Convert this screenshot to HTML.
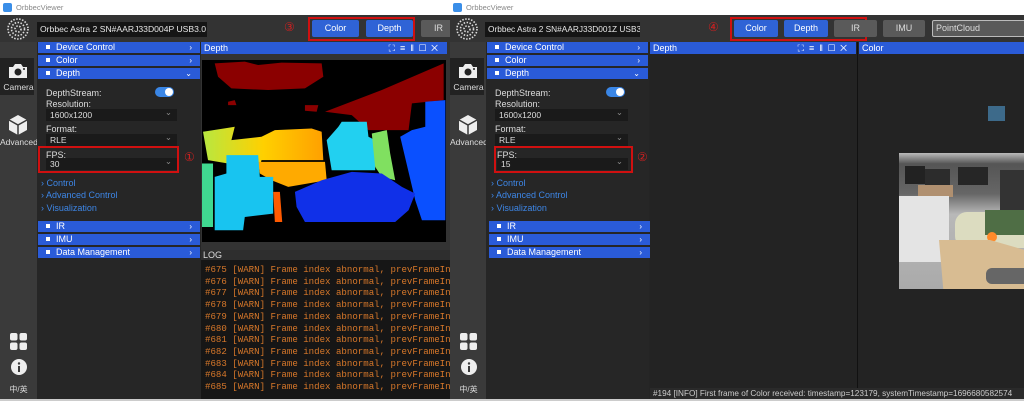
<!DOCTYPE html>
<html><head><meta charset="utf-8"><style>
*{margin:0;padding:0;box-sizing:border-box}
body{width:1024px;height:401px;overflow:hidden;background:#242424;font-family:"Liberation Sans","Noto Sans CJK SC",sans-serif;font-size:9px;color:#ddd;position:relative}
.a{position:absolute}
.title{background:#fff;height:15px;top:0;color:#888;font-size:7.5px;line-height:15px}
.tb{background:#333;top:15px;height:27px}
.combo{background:#151515;color:#e6e6e6;font-size:8.6px;line-height:15px;padding-left:3px;height:15px;white-space:nowrap;overflow:hidden}
.btn{background:#2f63d6;color:#fff;text-align:center;line-height:17px;height:17px;border-radius:2px;font-size:9px}
.gbtn{background:#5a5a5a;color:#ddd;text-align:center;line-height:17px;height:17px;border-radius:2px}
.hdr{background:#2a5bd8;color:#fff;height:11px;line-height:11px;font-size:9px;padding-left:8px}
.hdr:before{content:"";display:inline-block;width:4px;height:4px;background:#fff;margin-right:6px;vertical-align:1px}
.hdr i{position:absolute;right:8px;font-style:normal;font-size:8px}
.side{background:#3a3a3a;top:42px;width:37px;height:357px}
.panel{background:#262626}
.lbl{color:#ddd;font-size:9px}
.sel{background:#1a1a1a;color:#ddd;height:12px;line-height:12px;padding-left:4px;font-size:8.5px}
.sel:after{content:"⌄";position:absolute;right:5px;top:-3px;color:#888}
.lnk{color:#3d86e6;font-size:9px}
.red{border:2px solid #d01010}
.num{color:#d02020;font-size:12px;font-family:"Liberation Serif",serif}
.vh{background:#2a5bd8;color:#fff;height:12px;line-height:12px;padding-left:3px;font-size:9px}
.log{font-family:"Liberation Mono",monospace;color:#d8782a;font-size:9.1px;line-height:11.7px;white-space:pre}
.sidelbl{color:#ddd;font-size:8.5px;text-align:center;width:37px}
</style></head><body>

<!-- LEFT WINDOW -->
<div class="a title" style="left:0;width:450px;padding-left:16px">OrbbecViewer</div>
<div class="a" style="left:3px;top:3px;width:9px;height:9px;background:#3a8ee8;border-radius:2px"></div>
<div class="a tb" style="left:0;width:450px"></div>
<svg class="a" style="left:6px;top:17px" width="24" height="24" viewBox="0 0 24 24"><g fill="none" stroke="#ddd" stroke-width="1.6" stroke-dasharray="1.5 1.5"><circle cx="12" cy="12" r="10"/><circle cx="12" cy="12" r="6.5"/><circle cx="12" cy="12" r="3"/></g></svg>
<div class="a combo" style="left:37px;top:22px;width:170px">Orbbec Astra 2 SN#AARJ33D004P USB3.0 <span style="color:#888">⌄</span></div>
<div class="a num" style="left:284px;top:20px">③</div>
<div class="a red" style="left:308px;top:17px;width:107px;height:24px"></div>
<div class="a btn" style="left:312px;top:20px;width:47px">Color</div>
<div class="a btn" style="left:366px;top:20px;width:47px">Depth</div>
<div class="a gbtn" style="left:421px;top:20px;width:35px">IR</div>

<div class="a side" style="left:0"></div>
<div class="a" style="left:0;top:58px;width:34px;height:37px;background:#222"></div>
<svg class="a" style="left:8px;top:63px" width="20" height="16" viewBox="0 0 20 16"><path d="M1 4h4l2-3h6l2 3h4v11H1z" fill="#eee"/><circle cx="10" cy="9" r="3.5" fill="#222"/><circle cx="16" cy="6" r="1" fill="#222"/></svg>
<div class="a sidelbl" style="left:0;top:82px">Camera</div>
<svg class="a" style="left:8px;top:114px" width="20" height="22" viewBox="0 0 20 22"><path d="M10 1l9 5v10l-9 5-9-5V6z" fill="#eee"/><path d="M1 6l9 5 9-5M10 11v10" stroke="#3a3a3a" stroke-width="1.5" fill="none"/></svg>
<div class="a sidelbl" style="left:0;top:137px">Advanced</div>
<svg class="a" style="left:10px;top:333px" width="17" height="17" viewBox="0 0 17 17" fill="#eee"><rect x="0" y="0" width="7.5" height="7.5" rx="2"/><rect x="9.5" y="0" width="7.5" height="7.5" rx="2"/><rect x="0" y="9.5" width="7.5" height="7.5" rx="2"/><rect x="9.5" y="9.5" width="7.5" height="7.5" rx="2"/></svg>
<svg class="a" style="left:11px;top:359px" width="16" height="16" viewBox="0 0 16 16"><circle cx="8" cy="8" r="8" fill="#eee"/><rect x="7" y="7" width="2" height="6" fill="#3a3a3a"/><circle cx="8" cy="4.5" r="1.2" fill="#3a3a3a"/></svg>
<div class="a sidelbl" style="left:0;top:384px;font-size:8px">中/英</div>

<div class="a panel" style="left:37px;top:42px;width:164px;height:357px"></div>
<div class="a hdr" style="left:38px;top:42px;width:162px">Device Control<i>›</i></div>
<div class="a hdr" style="left:38px;top:55px;width:162px">Color<i>›</i></div>
<div class="a hdr" style="left:38px;top:68px;width:162px">Depth<i>⌄</i></div>
<div class="a lbl" style="left:46px;top:88px">DepthStream:</div>
<div class="a" style="left:155px;top:87px;width:19px;height:10px;border-radius:5px;background:#3a86e6"></div>
<div class="a" style="left:165px;top:88px;width:8px;height:8px;border-radius:4px;background:#fff"></div>
<div class="a lbl" style="left:46px;top:99px">Resolution:</div>
<div class="a sel" style="left:46px;top:109px;width:131px">1600x1200</div>
<div class="a lbl" style="left:46px;top:124px">Format:</div>
<div class="a sel" style="left:46px;top:134px;width:131px">RLE</div>
<div class="a red" style="left:38px;top:146px;width:141px;height:27px"></div>
<div class="a lbl" style="left:46px;top:150px">FPS:</div>
<div class="a sel" style="left:46px;top:158px;width:131px">30</div>
<div class="a num" style="left:184px;top:150px">①</div>
<div class="a lnk" style="left:41px;top:178px">› Control</div>
<div class="a lnk" style="left:41px;top:190px">› Advanced Control</div>
<div class="a lnk" style="left:41px;top:203px">› Visualization</div>
<div class="a hdr" style="left:38px;top:221px;width:162px">IR<i>›</i></div>
<div class="a hdr" style="left:38px;top:234px;width:162px">IMU<i>›</i></div>
<div class="a hdr" style="left:38px;top:247px;width:162px">Data Management<i>›</i></div>

<div class="a" style="left:201px;top:42px;width:249px;height:208px;background:#333"></div>
<div class="a vh" style="left:201px;top:42px;width:246px">Depth<span style="position:absolute;right:4px;letter-spacing:5px">⛶≡‖☐✕</span></div>
<svg class="a" style="left:202px;top:60px" width="244" height="182" viewBox="22 60 730 545" preserveAspectRatio="none">
<defs><linearGradient id="yg" x1="0" x2="1"><stop offset="0" stop-color="#b8e840"/><stop offset=".5" stop-color="#ffd000"/><stop offset="1" stop-color="#ffa000"/></linearGradient></defs>
<rect x="22" y="60" width="730" height="545" fill="#000"/>
<path d="M60 70L150 65 190 75 260 68 380 70 385 110 330 145 220 150 110 145 70 110z" fill="#8b0000"/>
<path d="M390 215L560 150 745 70 745 180 650 190 640 270 520 270 470 225z" fill="#8b0000"/>
<path d="M330 195L370 195 365 215 330 212z M100 185L120 180 125 195 100 195z" fill="#8b0000"/>
<path d="M690 185L750 180 750 540 680 540 660 480 615 290 650 270 690 260z" fill="#0a50ff"/>
<path d="M25 275L120 260 110 300 200 290 240 270 350 265 380 275 385 360 200 360 190 400 100 370 40 360z" fill="url(#yg)"/>
<path d="M190 365L390 365 395 420 280 440 230 420 195 400z" fill="#ffaa00"/>
<path d="M20 370L55 370 55 560 20 560z" fill="#40d890"/>
<path d="M95 345L190 345 195 410 235 410 235 520 150 530 145 570 60 570 60 410 95 400z" fill="#18c4f0"/>
<path d="M235 455L255 455 262 545 240 545z" fill="#ff5a00"/>
<path d="M395 300L430 260 440 245 515 245 520 290 540 300 540 390 410 390z" fill="#22d0f0"/>
<path d="M530 280L575 270 585 340 600 420 560 410 540 380z" fill="#80e060"/>
<path d="M300 455L380 420 470 395 560 400 620 440 660 460 640 510 600 545 330 545 305 500z" fill="#1030e8"/>
</svg>
<div class="a" style="left:201px;top:250px;width:249px;height:10px;background:#2e2e2e;color:#ddd;font-size:9px;line-height:10px;padding-left:2px">LOG</div>
<div class="a" style="left:201px;top:260px;width:249px;height:139px;background:#161616;overflow:hidden"><div class="a log" style="left:4px;top:4px">#675 [WARN] Frame index abnormal, prevFrameIn
#676 [WARN] Frame index abnormal, prevFrameIn
#677 [WARN] Frame index abnormal, prevFrameIn
#678 [WARN] Frame index abnormal, prevFrameIn
#679 [WARN] Frame index abnormal, prevFrameIn
#680 [WARN] Frame index abnormal, prevFrameIn
#681 [WARN] Frame index abnormal, prevFrameIn
#682 [WARN] Frame index abnormal, prevFrameIn
#683 [WARN] Frame index abnormal, prevFrameIn
#684 [WARN] Frame index abnormal, prevFrameIn
#685 [WARN] Frame index abnormal, prevFrameIn</div></div>

<!-- RIGHT WINDOW -->
<div class="a title" style="left:450px;width:574px;padding-left:16px">OrbbecViewer</div>
<div class="a" style="left:453px;top:3px;width:9px;height:9px;background:#3a8ee8;border-radius:2px"></div>
<div class="a tb" style="left:450px;width:574px"></div>
<svg class="a" style="left:455px;top:17px" width="24" height="24" viewBox="0 0 24 24"><g fill="none" stroke="#ddd" stroke-width="1.6" stroke-dasharray="1.5 1.5"><circle cx="12" cy="12" r="10"/><circle cx="12" cy="12" r="6.5"/><circle cx="12" cy="12" r="3"/></g></svg>
<div class="a combo" style="left:485px;top:22px;width:155px;font-size:8.3px">Orbbec Astra 2 SN#AARJ33D001Z USB3.0 <span style="color:#888">⌄</span></div>
<div class="a num" style="left:708px;top:20px">④</div>
<div class="a red" style="left:730px;top:17px;width:137px;height:24px"></div>
<div class="a btn" style="left:734px;top:20px;width:44px">Color</div>
<div class="a btn" style="left:784px;top:20px;width:44px">Depth</div>
<div class="a gbtn" style="left:834px;top:20px;width:43px">IR</div>
<div class="a gbtn" style="left:883px;top:20px;width:42px">IMU</div>
<div class="a gbtn" style="left:932px;top:20px;width:95px;border:1px solid #bbb;text-align:left;padding-left:3px;line-height:15px">PointCloud</div>

<div class="a side" style="left:450px"></div>
<div class="a" style="left:450px;top:58px;width:34px;height:37px;background:#222"></div>
<svg class="a" style="left:458px;top:63px" width="20" height="16" viewBox="0 0 20 16"><path d="M1 4h4l2-3h6l2 3h4v11H1z" fill="#eee"/><circle cx="10" cy="9" r="3.5" fill="#222"/><circle cx="16" cy="6" r="1" fill="#222"/></svg>
<div class="a sidelbl" style="left:450px;top:82px">Camera</div>
<svg class="a" style="left:458px;top:114px" width="20" height="22" viewBox="0 0 20 22"><path d="M10 1l9 5v10l-9 5-9-5V6z" fill="#eee"/><path d="M1 6l9 5 9-5M10 11v10" stroke="#3a3a3a" stroke-width="1.5" fill="none"/></svg>
<div class="a sidelbl" style="left:450px;top:137px">Advanced</div>
<svg class="a" style="left:460px;top:333px" width="17" height="17" viewBox="0 0 17 17" fill="#eee"><rect x="0" y="0" width="7.5" height="7.5" rx="2"/><rect x="9.5" y="0" width="7.5" height="7.5" rx="2"/><rect x="0" y="9.5" width="7.5" height="7.5" rx="2"/><rect x="9.5" y="9.5" width="7.5" height="7.5" rx="2"/></svg>
<svg class="a" style="left:461px;top:359px" width="16" height="16" viewBox="0 0 16 16"><circle cx="8" cy="8" r="8" fill="#eee"/><rect x="7" y="7" width="2" height="6" fill="#3a3a3a"/><circle cx="8" cy="4.5" r="1.2" fill="#3a3a3a"/></svg>
<div class="a sidelbl" style="left:450px;top:384px;font-size:8px">中/英</div>

<div class="a panel" style="left:486px;top:42px;width:163px;height:357px"></div>
<div class="a hdr" style="left:487px;top:42px;width:161px">Device Control<i>›</i></div>
<div class="a hdr" style="left:487px;top:55px;width:161px">Color<i>›</i></div>
<div class="a hdr" style="left:487px;top:68px;width:161px">Depth<i>⌄</i></div>
<div class="a lbl" style="left:495px;top:88px">DepthStream:</div>
<div class="a" style="left:606px;top:87px;width:19px;height:10px;border-radius:5px;background:#3a86e6"></div>
<div class="a" style="left:616px;top:88px;width:8px;height:8px;border-radius:4px;background:#fff"></div>
<div class="a lbl" style="left:495px;top:99px">Resolution:</div>
<div class="a sel" style="left:495px;top:109px;width:133px">1600x1200</div>
<div class="a lbl" style="left:495px;top:124px">Format:</div>
<div class="a sel" style="left:495px;top:134px;width:133px">RLE</div>
<div class="a red" style="left:494px;top:146px;width:139px;height:27px"></div>
<div class="a lbl" style="left:497px;top:150px">FPS:</div>
<div class="a sel" style="left:497px;top:158px;width:131px">15</div>
<div class="a num" style="left:637px;top:150px">②</div>
<div class="a lnk" style="left:491px;top:178px">› Control</div>
<div class="a lnk" style="left:491px;top:190px">› Advanced Control</div>
<div class="a lnk" style="left:491px;top:203px">› Visualization</div>
<div class="a hdr" style="left:489px;top:221px;width:161px">IR<i>›</i></div>
<div class="a hdr" style="left:489px;top:234px;width:161px">IMU<i>›</i></div>
<div class="a hdr" style="left:489px;top:247px;width:161px">Data Management<i>›</i></div>

<div class="a" style="left:650px;top:42px;width:374px;height:346px;background:#232323"></div>
<div class="a" style="left:857px;top:42px;width:1px;height:346px;background:#111"></div>
<div class="a vh" style="left:650px;top:42px;width:206px">Depth<span style="position:absolute;right:4px;letter-spacing:5px">⛶≡‖☐✕</span></div>
<div class="a vh" style="left:859px;top:42px;width:165px">Color</div>
<div class="a" style="left:988px;top:106px;width:17px;height:15px;background:#3d6a8a"></div>
<div class="a" style="left:899px;top:153px;width:125px;height:136px;background:linear-gradient(#bbb 0,#555 8%,#666 30%,#b8b8b8 45%,#aaa 100%)"></div>
<div class="a" style="left:905px;top:166px;width:20px;height:18px;background:#222"></div>
<div class="a" style="left:925px;top:169px;width:25px;height:18px;background:#2c2c2c"></div>
<div class="a" style="left:958px;top:167px;width:30px;height:18px;background:#262626"></div>
<div class="a" style="left:1000px;top:170px;width:24px;height:50px;background:#333"></div>
<div class="a" style="left:918px;top:185px;width:35px;height:12px;background:#b09070"></div>
<div class="a" style="left:899px;top:196px;width:50px;height:66px;background:#e4e4e4"></div>
<div class="a" style="left:955px;top:212px;width:69px;height:36px;background:#dcdcc0;border-radius:12px 0 0 12px"></div>
<div class="a" style="left:985px;top:210px;width:39px;height:25px;background:#4f6e45"></div>
<div class="a" style="left:987px;top:232px;width:10px;height:10px;background:#ff8a2a;border-radius:5px"></div>
<div class="a" style="left:939px;top:240px;width:85px;height:49px;background:#d8bc92;clip-path:polygon(0 0,60% 0,100% 20%,100% 100%,5% 100%)"></div>
<div class="a" style="left:986px;top:268px;width:38px;height:16px;background:#666;border-radius:6px 0 0 6px"></div>
<div class="a" style="left:650px;top:388px;width:374px;height:11px;background:#2a2a2a"></div>
<div class="a" style="left:653px;top:388px;color:#ccc;font-size:8.2px;line-height:11px;white-space:nowrap">#194 [INFO] First frame of Color received: timestamp=123179, systemTimestamp=1696680582574</div>
<div class="a" style="left:0;top:399px;width:1024px;height:2px;background:#ccc"></div>
</body></html>
